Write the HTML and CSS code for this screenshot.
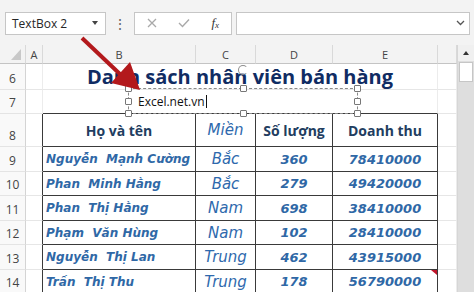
FILE: index.html
```html
<!DOCTYPE html>
<html lang="vi">

<head>
    <meta charset="UTF-8">
    <meta name="viewport" content="width=device-width, initial-scale=1.0">
    <title>Danh sách nhân viên bán hàng</title>
    <link rel="stylesheet" href="styles.css">
</head>

<body>
    <div id="toolbar">
        <div id="nameBox">TextBox 2 <span class="caret-down"></span></div>
        <div id="dots">⋮</div>
        <div id="fxButtons">
            <svg width="10" height="10" viewBox="0 0 10 10"><path d="M1 1L9 9M9 1L1 9" stroke="#a9a9a9" stroke-width="1.3" fill="none"/></svg>
            <svg width="12" height="10" viewBox="0 0 12 10"><path d="M1 5L4.5 8.5L11 1.5" stroke="#a9a9a9" stroke-width="1.4" fill="none"/></svg>
            <span class="fx">f<span class="fx-x">x</span></span>
        </div>
        <div id="formulaBar">
            <svg width="9" height="6" viewBox="0 0 9 6"><path d="M1 1L4.5 4.5L8 1" stroke="#555" stroke-width="1.3" fill="none"/></svg>
        </div>
    </div>

    <div id="sheet">
        <div id="grid">
            <!-- column headers -->
            <div class="ch corner"><span class="select-all"></span></div>
            <div class="ch">A</div>
            <div class="ch">B</div>
            <div class="ch">C</div>
            <div class="ch">D</div>
            <div class="ch">E</div>
            <div class="ch"></div>

            <!-- row 6 -->
            <div class="rh">6</div>
            <div class="c"></div>
            <div class="c title span4">Danh sách nhân viên bán hàng</div>
            <div class="c"></div>

            <!-- row 7 -->
            <div class="rh">7</div>
            <div class="c"></div>
            <div class="c span4 table-top"></div>
            <div class="c"></div>

            <!-- row 8 -->
            <div class="rh">8</div>
            <div class="c edge"></div>
            <div class="t hd">Họ và tên</div>
            <div class="t mien">Miền</div>
            <div class="t hd">Số lượng</div>
            <div class="t hd">Doanh thu</div>
            <div class="c"></div>

            <div class="rh">9</div>
            <div class="c edge"></div>
            <div class="t name">Nguyễn&nbsp; Mạnh Cường</div>
            <div class="t region">Bắc</div>
            <div class="t num">360</div>
            <div class="t num">78410000</div>
            <div class="c"></div>

            <div class="rh">10</div>
            <div class="c edge"></div>
            <div class="t name">Phan&nbsp; Minh Hằng</div>
            <div class="t region">Bắc</div>
            <div class="t num">279</div>
            <div class="t num">49420000</div>
            <div class="c"></div>

            <div class="rh">11</div>
            <div class="c edge"></div>
            <div class="t name">Phan&nbsp; Thị Hằng</div>
            <div class="t region">Nam</div>
            <div class="t num">698</div>
            <div class="t num">38410000</div>
            <div class="c"></div>

            <div class="rh">12</div>
            <div class="c edge"></div>
            <div class="t name">Phạm&nbsp; Văn Hùng</div>
            <div class="t region">Nam</div>
            <div class="t num">102</div>
            <div class="t num">28410000</div>
            <div class="c"></div>

            <div class="rh">13</div>
            <div class="c edge"></div>
            <div class="t name">Nguyễn&nbsp; Thị Lan</div>
            <div class="t region">Trung</div>
            <div class="t num">462</div>
            <div class="t num">43915000</div>
            <div class="c"></div>

            <div class="rh">14</div>
            <div class="c edge"></div>
            <div class="t name">Trần&nbsp; Thị Thu</div>
            <div class="t region">Trung</div>
            <div class="t num">178</div>
            <div class="t num note-cell">56790000<span class="note"></span></div>
            <div class="c"></div>

            <!-- selected text box -->
            <div id="textBox">
                <span class="tb-text">Excel.net.vn</span><span class="text-caret"></span>
                <span class="handle h-tl"></span>
                <span class="handle h-tm"></span>
                <span class="handle h-tr"></span>
                <span class="handle h-ml"></span>
                <span class="handle h-mr"></span>
                <span class="handle h-bl"></span>
                <span class="handle h-bm"></span>
                <span class="handle h-br"></span>
                <span class="rotate"></span>
            </div>
        </div>

        <div id="vscroll">
            <div class="sb-up"><span class="sb-arrow"></span></div>
            <div class="sb-thumb"></div>
        </div>
    </div>

    <svg id="arrow" width="474" height="292" viewBox="0 0 474 292">
        <line x1="82" y1="38" x2="122" y2="76" stroke="#b3191c" stroke-width="4"/>
        <polygon points="140,90 111,83 130,62" fill="#b3191c"/>
    </svg>
</body>

</html>
```

FILE: styles.css
```css
body {
    margin: 0;
    width: 474px;
    height: 292px;
    overflow: hidden;
    position: relative;
    background: #fff;
    font-family: "Open Sans", sans-serif;
}

/* formula bar row */
#toolbar {
    display: flex;
    align-items: center;
    height: 45px;
    box-sizing: border-box;
    padding: 1px 4px 0 5px;
    background: #f3f3f3;
}

#nameBox {
    width: 101px;
    height: 23px;
    box-sizing: border-box;
    border: 1px solid #c6c6c6;
    background: #fff;
    display: flex;
    align-items: center;
    justify-content: space-between;
    padding: 0 7px 0 6px;
    font-size: 12px;
    color: #262626;
}

.caret-down {
    border-left: 3.5px solid transparent;
    border-right: 3.5px solid transparent;
    border-top: 4px solid #444;
}

#dots {
    width: 28px;
    text-align: center;
    font-size: 14px;
    color: #666;
}

#fxButtons {
    width: 98px;
    height: 23px;
    box-sizing: border-box;
    border: 1px solid #c6c6c6;
    background: #fff;
    display: flex;
    align-items: center;
    justify-content: space-between;
    padding: 0 12px 0 12px;
}

.fx {
    font-family: "Liberation Serif", serif;
    font-style: italic;
    font-size: 13px;
    color: #333;
}

.fx-x {
    font-size: 9px;
    position: relative;
    top: 1px;
}

#formulaBar {
    flex: 1;
    margin-left: 4px;
    height: 23px;
    box-sizing: border-box;
    border: 1px solid #c6c6c6;
    background: #fff;
    display: flex;
    align-items: center;
    justify-content: flex-end;
    padding-right: 4px;
}

/* sheet */
#sheet {
    display: flex;
    height: 247px;
    overflow: hidden;
}

#grid {
    position: relative;
    width: 457px;
    display: grid;
    grid-template-columns: 26px 17px 153px 60px 77px 105px 19px;
    grid-template-rows: 19px 26px 24px 33px 25px 24px 25px 24px 25px 24px;
}

.ch,
.rh,
.c,
.t {
    box-sizing: border-box;
    display: flex;
    align-items: center;
    justify-content: center;
    white-space: nowrap;
    overflow: hidden;
}

.ch {
    background: #f3f3f3;
    border-right: 1px solid #d9d9d9;
    border-bottom: 1px solid #c4c4c4;
    font-size: 11px;
    color: #444;
}

.corner {
    position: relative;
}

.select-all {
    position: absolute;
    right: 4px;
    bottom: 3px;
    border-left: 10px solid transparent;
    border-bottom: 11px solid #c8c8c8;
}

.rh {
    background: #f9f9f9;
    border-right: 1px solid #d4d4d4;
    border-bottom: 1px solid #e4e4e4;
    font-size: 12px;
    color: #444;
    align-items: flex-end;
    padding-bottom: 2px;
}

.c {
    border-right: 1px solid #ececec;
    border-bottom: 1px solid #e6e6e6;
}

.span4 {
    grid-column: span 4;
}

.title {
    font-size: 20px;
    font-weight: bold;
    color: #102c63;
}

.table-top {
    border-bottom: 1px solid #3a3a3a;
}

.edge {
    border-right: 1px solid #3a3a3a;
}

.t {
    border-right: 1px solid #3a3a3a;
    border-bottom: 1px solid #3a3a3a;
}

.hd {
    font-size: 14px;
    font-weight: bold;
    color: #223d60;
}

.mien,
.region {
    font-family: "DejaVu Sans", sans-serif;
    font-style: italic;
    font-size: 15px;
    color: #2e69ad;
}

.name {
    justify-content: flex-start;
    padding-left: 3px;
    font-family: "DejaVu Sans", sans-serif;
    font-style: italic;
    font-weight: bold;
    font-size: 12px;
    color: #2f68a6;
}

.num {
    font-family: "DejaVu Sans", sans-serif;
    font-style: italic;
    font-weight: bold;
    font-size: 13px;
    color: #2f68a6;
}

.note-cell {
    position: relative;
}

.note {
    position: absolute;
    top: 0;
    right: 0;
    border-left: 6px solid transparent;
    border-top: 5px solid #c0152a;
}

/* selected text box over rows 6-7 */
#textBox {
    position: absolute;
    left: 128px;
    top: 43px;
    width: 230px;
    height: 26px;
    box-sizing: border-box;
    border: 1px dashed #8a8a8a;
    display: flex;
    align-items: center;
    padding-left: 9px;
}

.tb-text {
    font-size: 12px;
    color: #111;
}

.text-caret {
    width: 1px;
    height: 13px;
    background: #111;
    margin-left: 1px;
}

.handle {
    position: absolute;
    width: 5px;
    height: 5px;
    background: #fff;
    border: 1px solid #777;
    border-radius: 1px;
}

.h-tl { left: -4px; top: -4px; }
.h-tm { left: 111px; top: -4px; }
.h-tr { right: -4px; top: -4px; }
.h-ml { left: -4px; top: 9px; }
.h-mr { right: -4px; top: 9px; }
.h-bl { left: -4px; bottom: -4px; }
.h-bm { left: 111px; bottom: -4px; }
.h-br { right: -4px; bottom: -4px; }

.rotate {
    position: absolute;
    left: 109px;
    top: -24px;
    width: 8px;
    height: 8px;
    border: 1.5px solid #8d8d8d;
    border-right-color: transparent;
    border-radius: 50%;
    background: rgba(255, 255, 255, 0.6);
}

/* scrollbar */
#vscroll {
    width: 17px;
    box-sizing: border-box;
    border-left: 1px solid #d6d6d6;
    background: #dedede;
}

.sb-up {
    height: 16px;
    background: #f0f0f0;
    display: flex;
    align-items: center;
    justify-content: center;
}

.sb-arrow {
    border-left: 3.5px solid transparent;
    border-right: 3.5px solid transparent;
    border-bottom: 4px solid #333;
}

.sb-thumb {
    margin: 1px 1px 0;
    height: 18px;
    background: #fff;
    border: 1px solid #c6c6c6;
}

#arrow {
    position: absolute;
    left: 0;
    top: 0;
    pointer-events: none;
}
```
